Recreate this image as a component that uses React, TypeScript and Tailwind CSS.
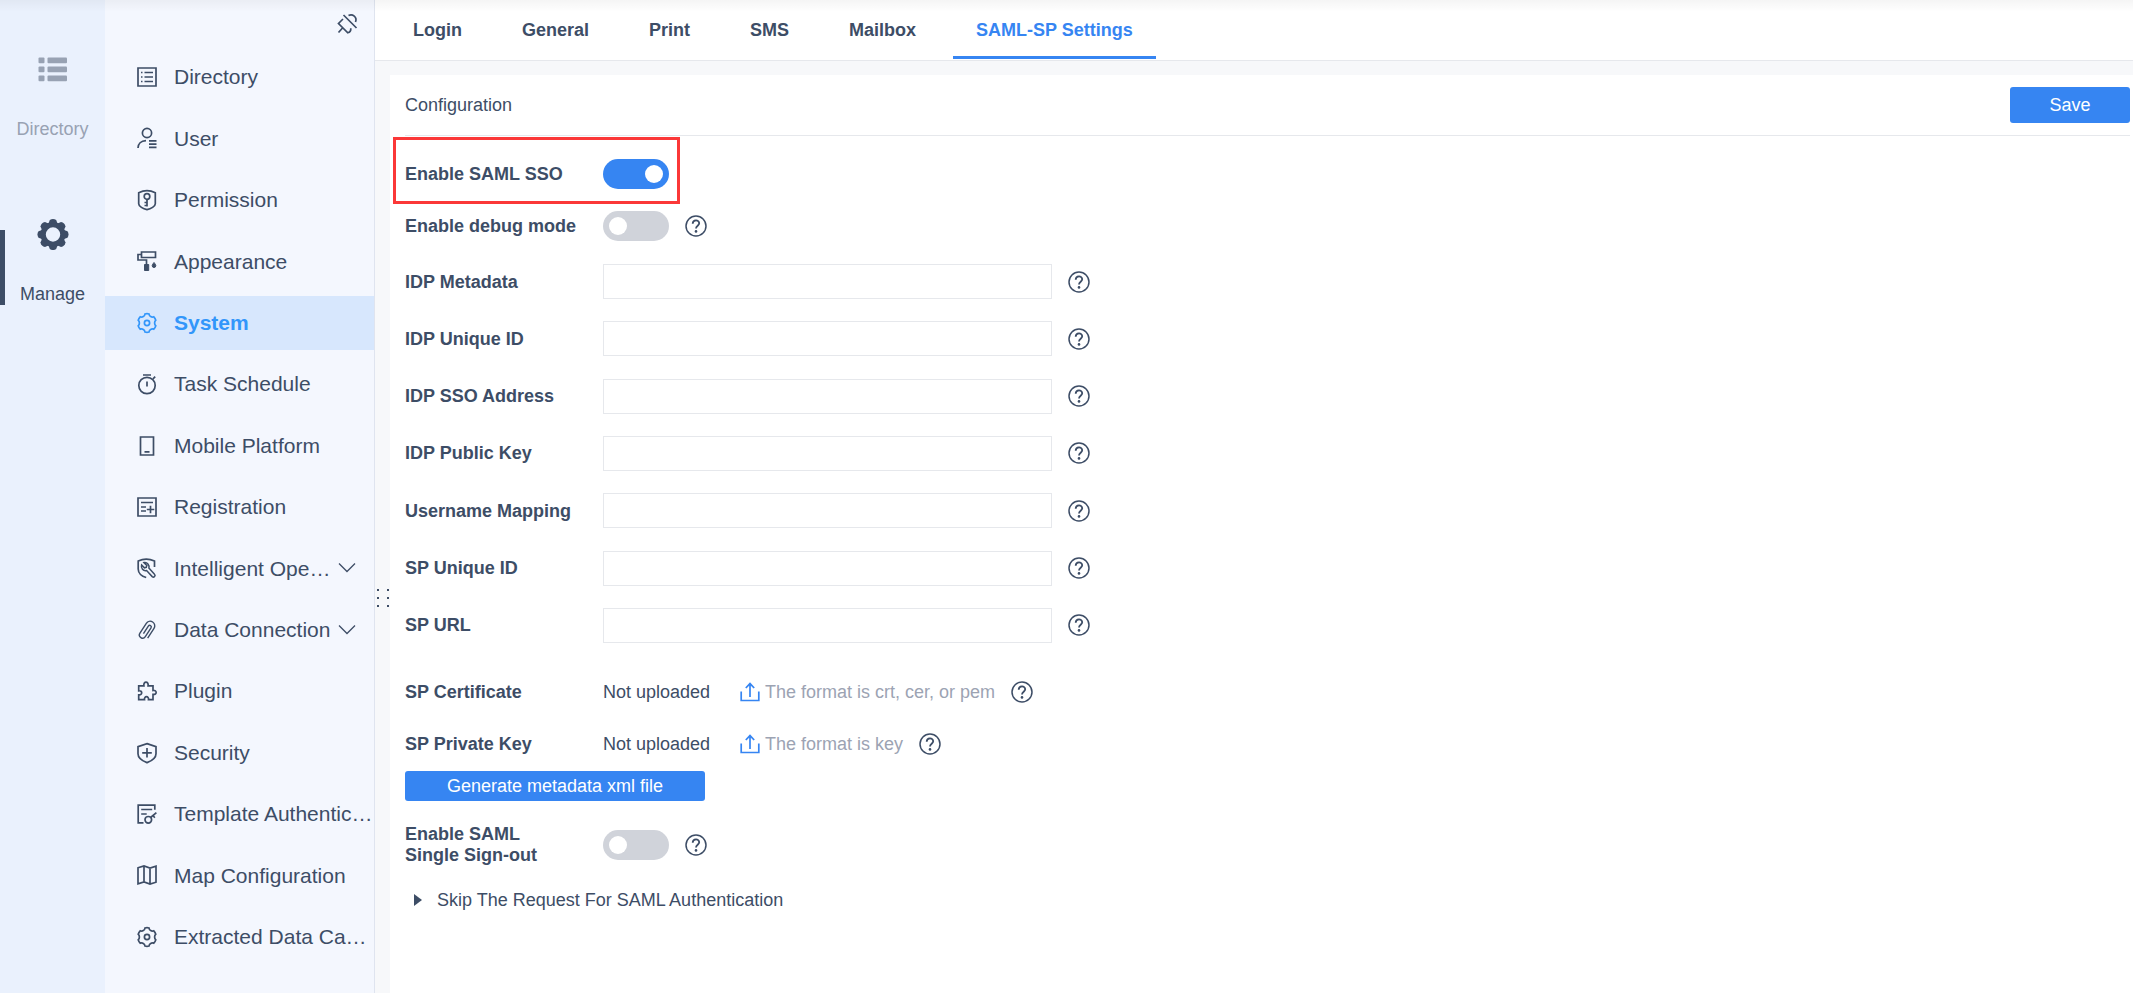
import React, { useState } from "react";

interface IconProps {
  name: string,
  className?: string
}

const GEAR = "M8 1Q10 .4 12 1C12.3 3.4 14.6 4.6 16.8 3.8Q18.2 5.2 18.8 7.2C17.2 8.6 17.2 11.4 18.8 12.8Q18.2 14.8 16.8 16.2C14.6 15.4 12.3 16.6 12 19Q10 19.6 8 19C7.7 16.6 5.4 15.4 3.2 16.2Q1.8 14.8 1.2 12.8C2.8 11.4 2.8 8.6 1.2 7.2Q1.8 5.2 3.2 3.8C5.4 4.6 7.7 3.4 8 1Z";

const icons: Record<string, React.ReactNode> = {
  directory: (
    <>
      <path d="M1 1h18v18H1z" />
      <path d="M4 5.5h1.5M7.5 5.5H16M4 10h1.5M7.5 10H16M4 14.5h1.5M7.5 14.5H16" />
    </>
  ),
  user: (
    <>
      <circle cx="10" cy="5" r="4.6" />
      <path d="M1 20c0-4 3-7.2 8-7.4M12 12.8h7.5M12 16.1h7.5M12 19.4h7.5" />
    </>
  ),
  permission: (
    <>
      <path d="M10 .7c2.6 0 6 .9 8.3 2v11c0 2.6-4.5 5.2-8.3 6-3.8-.8-8.3-3.4-8.3-6v-11C4 1.600 7.4.7 10 .7z" />
      <circle cx="10" cy="6.5" r="2.8" />
      <path d="M10 9v7.5M10 12.5H7.5M10 15.5H7.500" />
    </>
  ),
  appearance: (
    <>
      <path d="M4.5 1h14v5.5h-14zM4.5 3.5H1V9h8.5v4.5" />
      <path d="M7.5 13.5h4.2v6H7.5zM17 11.500c1 1.300 1.800 2.200 1.800 3.200a1.800 1.800 0 0 1-3.600 0c0-1 .8-1.900 1.800-3.200z" fill="currentColor" strokeWidth="1" />
    </>
  ),
  system: (
    <>
      <path d={GEAR} />
      <circle cx="10" cy="10" r="2.6" />
    </>
  ),
  schedule: (
    <>
      <circle cx="10" cy="11.5" r="8.2" />
      <path d="M6 1h8M10 7.500v5M16 4.800l2.200-2.200" />
    </>
  ),
  mobile: <path d="M3.500 1h13v18h-13zM7.500 15.800h5" />,
  registration: (
    <>
      <path d="M1 1h18v18H1z" />
      <path d="M4 5.500h12M4 10h5M4 14h5M13.500 8.800v7.500M9.800 12.500h7.500" />
    </>
  ),
  intelligent: (
    <>
      <path d="M17.500 9V3C12 .4 6.500.4 1.200 3v8c0 4 3.500 7.300 8 8.500" />
      <path d="M7 4.600l2.800 2.800-.5 1.900-1.900.5L4.600 7c-1 3.400 1.700 6.300 5 5.500l5.600 6.100c1.700 1.500 3.800-.8 2.300-2.300l-5.600-6.200C12.700 6.900 10.200 3.900 7 4.600z" strokeWidth="1.500" />
    </>
  ),
  connection: (
    <path d="M15 16.500V4.800a4.600 4.600 0 0 0-9.200 0v11.700a3.200 3.200 0 0 0 6.400 0V6a1.600 1.600 0 0 0-3.200 0v9" transform="rotate(33 10 10)" strokeWidth="1.400" />
  ),
  plugin: (
    <path d="M1.700 4.800h5.200c-.8-4.800 5-4.800 4.200 0H16v4.700c4.200-.8 4.200 4.600 0 3.900v5.300h-4.500c.7-4-4.700-4-4 0H1.700v-4.800c4 .7 4-4.800 0-4.100z" />
  ),
  security: (
    <>
      <path d="M10 .6l9 3v7.200c0 4.200-4.500 7.200-9 8.800-4.500-1.600-9-4.600-9-8.800V3.600z" />
      <path d="M10 5v9.500M5.200 9.800h9.600" />
    </>
  ),
  template: (
    <>
      <path d="M6.500 18.800H1.200V1.200h16.600v4.500M4.200 5.500h11M4.200 10h5.500" />
      <circle cx="11.300" cy="15.800" r="3.300" />
      <path d="M13.600 13.500l5.800-4.800M16 11.500l1.800 2.200" />
    </>
  ),
  map: <path d="M1 2.800L7 1l6 2 6-1.800v16L13 19l-6-2-6 1.800zM7 1v16M13 3v16" />,
  pin: (
    <path d="M6.500 1L19.500 14M11.500 1.500c4-2 9 1.500 7 6.500M6 5L1.500 9.500l9.300 9.300c2-.5 3.200-2.200 3-4.500M5.500 14l-4 4.500" />
  ),
  upload: <path d="M10 15V2M5.800 6L10 1.600 14.200 6M1.200 9.500v9h17.600v-9" />,
  chevron: <path d="M2 5.500l8 8 8-8" strokeWidth="1.300" />,
};

const Icon = ({ name, className = "size-5" }: IconProps) => (
  <svg viewBox="0 0 20 20" className={`shrink-0 overflow-visible ${className}`} fill="none" stroke="currentColor" strokeWidth="1.700" aria-hidden="true">
    {icons[name]}
  </svg>
);

const navItems = [
  { icon: "directory", label: "Directory" },
  { icon: "user", label: "User" },
  { icon: "permission", label: "Permission" },
  { icon: "appearance", label: "Appearance" },
  { icon: "system", label: "System", active: true },
  { icon: "schedule", label: "Task Schedule" },
  { icon: "mobile", label: "Mobile Platform" },
  { icon: "registration", label: "Registration" },
  { icon: "intelligent", label: "Intelligent Ope…", expandable: true },
  { icon: "connection", label: "Data Connection", expandable: true },
  { icon: "plugin", label: "Plugin" },
  { icon: "security", label: "Security" },
  { icon: "template", label: "Template Authentic…" },
  { icon: "map", label: "Map Configuration" },
  { icon: "system", label: "Extracted Data Ca…" },
];

const tabs = ["Login", "General", "Print", "SMS", "Mailbox", "SAML-SP Settings"];

const fields = [
  "IDP Metadata",
  "IDP Unique ID",
  "IDP SSO Address",
  "IDP Public Key",
  "Username Mapping",
  "SP Unique ID",
  "SP URL",
];

const Rail = () => (
  <nav className="flex w-[105px] shrink-0 flex-col bg-[#eaf1fd] pt-[55px] text-lg/6">
    <a href="#directory" className="flex flex-col items-center text-[#98a2b3]">
      <svg viewBox="0 0 30 30" className="size-[30px]" fill="currentColor" aria-hidden="true">
        {[2.500, 11.500, 20.500].map((y) => (
          <g key={y}>
            <rect x=".5" y={y} width="6" height="5.800" rx="1" />
            <rect x="9.500" y={y} width="19.500" height="5.800" rx="1" />
          </g>
        ))}
      </svg>
      <span className="mt-8">Directory</span>
    </a>
    <a href="#manage" className="mt-[77px] flex flex-col items-center text-[#3d4d66]">
      <svg viewBox="-16 -16.500 32 32" className="size-8" fill="currentColor" aria-hidden="true">
        <circle r="9.800" fill="none" stroke="currentColor" strokeWidth="5.200" />
        {[0, 45, 90, 135, 180, 225, 270, 315].map((deg) => (
          <path key={deg} d="M-4.500-11L-3.200-14.500Q0-16.600 3.200-14.500L4.500-11z" transform={`rotate(${deg})`} />
        ))}
      </svg>
      <span className="mt-8">Manage</span>
    </a>
    <span className="absolute left-0 top-[230px] h-[75px] w-[5px] bg-[#3d4d66]" />
  </nav>
);

const Sidebar = () => (
  <aside className="flex w-[270px] shrink-0 flex-col border-r border-[#dfe4ef] bg-[#f4f7fe] pb-[29px]">
    <div className="flex h-[50px] justify-end pr-[17px] pt-[14px]">
      <button type="button" aria-label="Unpin menu" className="size-5"><Icon name="pin" /></button>
    </div>
    <nav className="flex flex-1 flex-col justify-between">
      {navItems.map((item) => (
        <a
          key={item.label}
          href="#nav"
          className={`flex h-[54px] items-center pl-8 text-[21px] ${item.active ? "bg-[#d7e7fd] font-bold text-[#3296fa]" : ""}`}
        >
          <Icon name={item.icon} />
          <span className="ml-[17px] whitespace-nowrap">{item.label}</span>
          {item.expandable && <Icon name="chevron" className="ml-auto mr-[17px] size-5" />}
        </a>
      ))}
    </nav>
  </aside>
);

const Help = () => (
  <button type="button" aria-label="Help" className="ml-4 size-[22px] shrink-0">
    <svg viewBox="0 0 22 22" className="size-[22px]" fill="none" stroke="currentColor" strokeWidth="1.500" aria-hidden="true">
      <circle cx="11" cy="11" r="10" />
      <path d="M7.700 8.800C7.700 4.300 14.200 4.400 14.200 8.300c0 2.400-3.200 2.500-3.200 5.200" strokeWidth="1.800" />
      <circle cx="11" cy="16.400" r="1.300" fill="currentColor" stroke="none" />
    </svg>
  </button>
);

interface ToggleProps {
  id: string,
  label: string,
  on?: boolean
}

const Toggle = ({ id, label, on = false }: ToggleProps) => {
  const [checked, setChecked] = useState(on);

  return (
    <>
      <label htmlFor={id} className="w-[198px] shrink-0 whitespace-pre-line text-lg/[21px] font-bold">{label}</label>
      <input
        id={id}
        type="checkbox"
        role="switch"
        checked={checked}
        onChange={() => setChecked(!checked)}
        className="flex h-[30px] w-[66px] shrink-0 cursor-pointer appearance-none items-center rounded-full bg-[#d0d3da] px-1.5 before:size-[18px] before:rounded-full before:bg-white checked:justify-end checked:bg-[#3685f2]"
      />
    </>
  );
};

const Upload = ({ label, hint }: { label: string, hint: string }) => (
  <div className="flex h-[30px] items-center">
    <span className="w-[198px] shrink-0 font-bold">{label}</span>
    <span className="w-[137px]">Not uploaded</span>
    <button type="button" className="flex items-center text-[#9ca3b3]">
      <Icon name="upload" className="size-5 text-[#3685f2]" />
      <span className="ml-[5px]">{hint}</span>
    </button>
    <Help />
  </div>
);

const App = () => {
  return (
    <div className="relative flex min-h-screen bg-white font-['Liberation_Sans',Arial,sans-serif] text-[#3d4d66]">
      <div className="pointer-events-none absolute inset-x-0 top-0 h-3 bg-linear-to-b from-black/4 to-transparent" />
      <Rail />
      <Sidebar />

      <div className="flex min-w-0 flex-1 flex-col text-lg/6">
        <header className="flex h-[61px] gap-[14px] border-b border-[#e6e8ec] px-[15px]">
          {tabs.map((tab, i) => (
            <button
              key={tab}
              type="button"
              className={`mb-px flex whitespace-nowrap border-b-3 px-[23px] pt-[18px] font-bold ${i === 5 ? "border-[#3685f2] text-[#3685f2]" : "border-transparent"}`}
            >
              {tab}
            </button>
          ))}
        </header>

        <div className="flex flex-1 bg-[#f7f8fa] pt-[14px]">
          <div className="flex w-[15px] shrink-0 justify-center pt-[514px]">
            <svg viewBox="0 0 12 18" className="h-[18px] w-3" fill="currentColor" aria-hidden="true">
              <path d="M0 0h2v2H0zM10 0h2v2h-2zM0 8h2v2H0zM10 8h2v2h-2zM0 16h2v2H0zM10 16h2v2h-2z" />
            </svg>
          </div>

          <main className="flex-1 bg-white pl-[15px] pr-[3px]">
            <div className="flex h-[61px] items-center justify-between border-b border-[#e6e8ec]">
              <h1>Configuration</h1>
              <button type="button" className="h-9 w-[120px] rounded-[3px] bg-[#3685f2] text-white">Save</button>
            </div>

            <form onSubmit={(e) => e.preventDefault()}>
              <div className="relative mt-[23px] flex items-center">
                <Toggle id="sso" label="Enable SAML SSO" on />
                <div className="pointer-events-none absolute -left-3 -top-[22px] h-[67px] w-[287px] border-3 border-[#fb3838]" />
              </div>
              <div className="mt-[22px] flex items-center">
                <Toggle id="debug" label="Enable debug mode" />
                <Help />
              </div>

              <div className="mt-[23px] flex h-[379px] flex-col justify-between">
                {fields.map((field) => (
                  <div key={field} className="flex items-center">
                    <label htmlFor={field} className="w-[198px] shrink-0 font-bold">{field}</label>
                    <input id={field} type="text" className="h-[35px] w-[449px] border border-[#e6e8ec] px-2 outline-none" />
                    <Help />
                  </div>
                ))}
              </div>

              <div className="mt-[34px] space-y-[22px]">
                <Upload label="SP Certificate" hint="The format is crt, cer, or pem" />
                <Upload label="SP Private Key" hint="The format is key" />
              </div>

              <button type="button" className="mt-3 flex h-[30px] w-[300px] items-center justify-center rounded-[3px] bg-[#3685f2] text-white">
                Generate metadata xml file
              </button>

              <div className="mt-[23px] flex items-center">
                <Toggle id="signout" label={"Enable SAML\nSingle Sign-out"} />
                <Help />
              </div>

              <button type="button" className="mt-[22px] flex items-center pl-[9px]">
                <svg viewBox="0 0 8 12" className="h-3 w-2" fill="currentColor" aria-hidden="true">
                  <path d="M0 0l8 6-8 6z" />
                </svg>
                <span className="ml-[15px]">Skip The Request For SAML Authentication</span>
              </button>
            </form>
          </main>
        </div>
      </div>
    </div>
  );
};

export default App;
